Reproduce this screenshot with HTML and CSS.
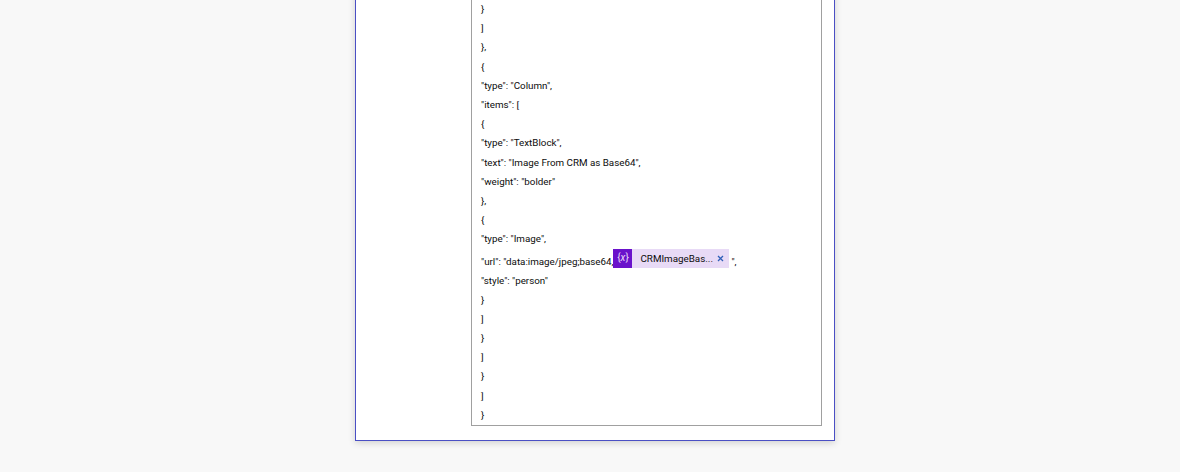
FILE: index.html
```html
<!DOCTYPE html>
<html lang="en">
<head>
<meta charset="utf-8">
<title>Adaptive card</title>
<link rel="stylesheet" href="styles.css">
</head>
<body>
<main class="card">
  <div class="editor">
    <div class="line">}</div>
    <div class="line">]</div>
    <div class="line">},</div>
    <div class="line">{</div>
    <div class="line">"type": "Column",</div>
    <div class="line">"items": [</div>
    <div class="line">{</div>
    <div class="line">"type": "TextBlock",</div>
    <div class="line">"text": "Image From CRM as Base64",</div>
    <div class="line">"weight": "bolder"</div>
    <div class="line">},</div>
    <div class="line">{</div>
    <div class="line">"type": "Image",</div>
    <div class="line line-token">"url": "data:image/jpeg;base64,<span class="token"><span class="token-icon">{<i>x</i>}</span><span class="token-label">CRMImageBas...</span><svg class="token-close" viewBox="0 0 7 7" width="7" height="7" aria-hidden="true"><path d="M1 1L6 6M6 1L1 6"/></svg></span>",</div>
    <div class="line">"style": "person"</div>
    <div class="line">}</div>
    <div class="line">]</div>
    <div class="line">}</div>
    <div class="line">]</div>
    <div class="line">}</div>
    <div class="line">]</div>
    <div class="line">}</div>
  </div>
</main>
</body>
</html>
```
FILE: styles.css
```css
html, body {
  margin: 0;
  height: 472px;
  overflow: hidden;
}
body {
  background: #f8f8f8;
  display: flex;
  flex-direction: column;
  justify-content: flex-end;
  align-items: flex-start;
  padding: 0 0 31px 355px;
  box-sizing: border-box;
  font-family: Roboto, "Noto Sans", sans-serif;
  font-size: 9.8px;
  color: #0c0c0c;
}
.card {
  width: 480px;
  box-sizing: border-box;
  flex: none;
  background: #fff;
  border: 1px solid #4a4fc4;
  box-shadow: 0 2px 7px rgba(0, 0, 0, 0.16);
  padding: 0 12px 14px 115px;
}
.editor {
  border: 1px solid #a0a0a0;
  padding: 20px 9px 0;
}
.line {
  height: 19.2px;
  line-height: 18px;
  white-space: nowrap;
}
.line-token {
  height: 22px;
  line-height: 23px;
  display: flex;
  align-items: flex-start;
}
.token {
  display: flex;
  align-items: stretch;
  height: 19px;
  margin-top: -1px;
  background: #e8daf6;
  margin-right: 2px;
  line-height: 19px;
}
.token-icon {
  width: 19px;
  background: #6a12cb;
  color: #e9dcf7;
  text-align: center;
  line-height: 18px;
  font-size: 10px;
}
.token-label {
  width: 79px;
  padding-left: 8px;
  box-sizing: border-box;
}
.token-close {
  align-self: center;
  margin: 0 5px 0 6px;
  fill: none;
  stroke: #2f5fb8;
  stroke-width: 1.3;
}
```
